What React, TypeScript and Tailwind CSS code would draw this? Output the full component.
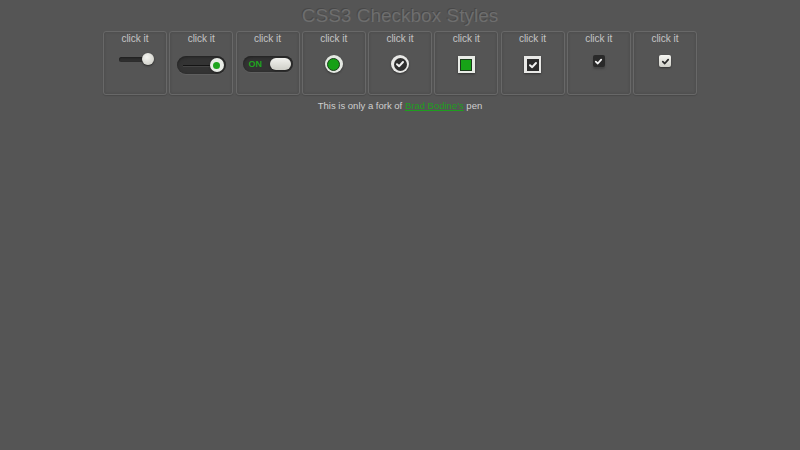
import React from 'react';

const Check = ({ color, size = 10 }: { color: string; size?: number }) => (
    <svg width={size} height={size} viewBox="0 0 10 10">
        <path d="M2 5.2 L4.2 7.2 L8 3" fill="none" stroke={color} strokeWidth="2" strokeLinecap="round" strokeLinejoin="round" />
    </svg>
);

const Box = ({ mt, children }: { mt: string; children: React.ReactNode }) => (
    <div className="w-[64px] h-[64px] rounded-[3px] border border-[#686868] shadow-[inset_0_0_3px_#474747,0_1px_1px_#4a4a4a] flex flex-col items-center">
        <div className="text-[10px] leading-[12px] mt-[1px] text-[#c4c4c4]">click it</div>
        <div className={`${mt} flex items-center justify-center`}>{children}</div>
    </div>
);

export default function App() {
    return (
        <div className="min-h-[450px] w-full bg-[#555555] font-['Liberation_Sans',Arial,sans-serif]">
            <h1 className="h-[31px] flex items-center justify-center text-[19px] text-[#6e6e6e] [text-shadow:-1px_-1px_0_#484848] pt-[1px]">
                CSS3 Checkbox Styles
            </h1>

            <div className="flex justify-center gap-[2.25px]">
                <Box mt="mt-[8px]">
                    <div className="relative w-[35px] h-[12px] flex items-center ml-[2px]">
                        <div className="w-[31px] h-[5px] rounded-full bg-[#2f2f2f] shadow-[inset_0_1px_2px_#1e1e1e]" />
                        <div className="absolute right-0 top-0 w-[12px] h-[12px] rounded-full bg-[radial-gradient(circle_at_40%_35%,#f4f4f0,#c8c8c0)] shadow-[0_1px_2px_#2a2a2a]" />
                    </div>
                </Box>

                <Box mt="mt-[11px]">
                    <div className="relative w-[49px] h-[18px] rounded-full bg-[#333333] shadow-[inset_0_1px_3px_#1f1f1f,0_1px_0_#5f5f5f] flex items-center px-[6px]">
                        <div className="w-[30px] h-[1px] bg-[#141414] shadow-[0_1px_0_#444]" />
                        <div className="absolute right-[2px] top-[2px] w-[14px] h-[14px] rounded-full bg-[#e8ece6] flex items-center justify-center shadow-[0_1px_2px_#222]">
                            <div className="w-[7px] h-[7px] rounded-full bg-[#1ea51e]" />
                        </div>
                    </div>
                </Box>

                <Box mt="mt-[11px]">
                    <div className="relative w-[50px] h-[16px] rounded-full bg-[#333333] shadow-[inset_0_1px_3px_#1f1f1f,0_1px_0_#5f5f5f] flex items-center">
                        <span className="ml-[6px] text-[9px] font-bold text-[#1fa51f] leading-none">ON</span>
                        <div className="absolute right-[2px] top-[2px] w-[21px] h-[12px] rounded-full bg-[linear-gradient(#f2f2ee,#cfcfc8)] shadow-[0_1px_2px_#222]" />
                    </div>
                </Box>

                <Box mt="mt-[10px]">
                    <div className="w-[18px] h-[18px] rounded-full bg-[#e4e8e2] flex items-center justify-center shadow-[0_1px_2px_#333]">
                        <div className="w-[13px] h-[13px] rounded-full bg-[#16a016] border border-[#1b3d1b]" />
                    </div>
                </Box>

                <Box mt="mt-[10px]">
                    <div className="w-[18px] h-[18px] rounded-full bg-[#e8e8e6] flex items-center justify-center shadow-[0_1px_2px_#333]">
                        <div className="w-[13px] h-[13px] rounded-full bg-[#2e2e2e] flex items-center justify-center">
                            <Check color="#f2f2f2" size={10} />
                        </div>
                    </div>
                </Box>

                <Box mt="mt-[11px]">
                    <div className="w-[17px] h-[17px] bg-[#e8ebe6] flex items-center justify-center shadow-[0_1px_2px_#333]">
                        <div className="w-[12px] h-[12px] bg-[#17a317] border border-[#1a3a1a]" />
                    </div>
                </Box>

                <Box mt="mt-[11px]">
                    <div className="w-[17px] h-[17px] bg-[#e8e8e6] flex items-center justify-center shadow-[0_1px_2px_#333]">
                        <div className="w-[12px] h-[12px] bg-[#2c2c2c] flex items-center justify-center">
                            <Check color="#f2f2f2" size={10} />
                        </div>
                    </div>
                </Box>

                <Box mt="mt-[10px]">
                    <div className="w-[12px] h-[12px] rounded-[2px] bg-[#2a2a2a] flex items-center justify-center shadow-[0_2px_2px_#444]">
                        <Check color="#f4f4f4" size={9} />
                    </div>
                </Box>

                <Box mt="mt-[10px]">
                    <div className="w-[12px] h-[12px] rounded-[2px] bg-[linear-gradient(#f4f4f0,#cfcfc8)] flex items-center justify-center shadow-[0_1px_2px_#333]">
                        <Check color="#2a2a2a" size={9} />
                    </div>
                </Box>
            </div>

            <p className="mt-[4px] text-center text-[9.5px] leading-[14px] text-[#cfcfcf]">
                This is only a fork of{' '}
                <a className="text-[#1e9e1e] underline">Brad Bodine's</a> pen
            </p>
        </div>
    );
}
